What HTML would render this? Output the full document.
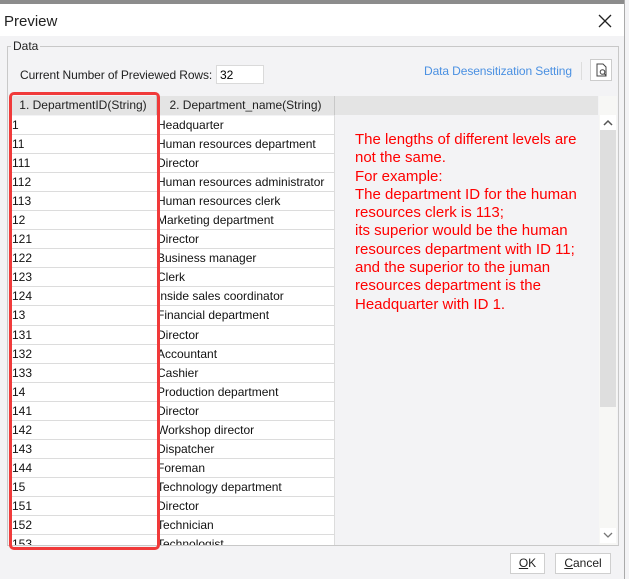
<!DOCTYPE html>
<html><head><meta charset="utf-8"><style>
*{box-sizing:border-box;margin:0;padding:0}
body{width:629px;height:579px;overflow:hidden;background:#f3f3f5;font-family:"Liberation Sans",Arial,sans-serif;position:relative}
.abs{position:absolute}
.topbar{left:0;top:0;width:629px;height:4px;background:#8c8c8c}
.title{left:0;top:4px;width:629px;height:32px;background:#fff}
.title span{position:absolute;left:4px;top:9px;font-size:15px;color:#222}
.fs{left:7px;top:46px;width:612px;height:500px;border:1px solid #c8c8c8}
.legend{left:11px;top:39px;font-size:12px;color:#222;background:#f3f3f5;padding:0 2px}
.lbl{left:20px;top:68px;font-size:12px;color:#222;letter-spacing:-0.1px}
.inp{left:216px;top:65px;width:48px;height:19px;background:#fff;border:1px solid #dadada;font-size:12px;padding:2px 3px}
.link{left:424px;top:64px;font-size:12px;color:#4a90e2;letter-spacing:-0.1px}
.sep{left:581px;top:62px;width:1px;height:18px;background:#ddd}
.ib{left:590px;top:59px;width:22px;height:22px;background:#fff;border:1px solid #ccc}
.hdr{left:10px;top:96px;width:588px;height:19px;background:#e4e4e4}
.h{position:absolute;top:0;height:19px;font-size:12px;color:#222;line-height:19px;text-align:center;border-right:1px solid #c8c8c8}
.grid{left:10px;top:116px;width:324px;height:429px;overflow:hidden;background:#fff}
.row{height:19.05px;border-bottom:1px solid #dcdcdc;font-size:12px;line-height:19px;color:#111;position:relative}
.c1{position:absolute;left:2px;top:0;width:145px}
.c2{position:absolute;left:147px;top:0;width:177px;overflow:hidden;border-left:1px solid #dcdcdc;white-space:nowrap}
.c2 i{font-style:normal;margin-left:-1px}
.vline{left:334px;top:115px;width:1px;height:430px;background:#dcdcdc}
.sb{left:599px;top:96px;width:18px;height:449px;background:#f7f7f5}
.thumb{left:600px;top:130px;width:16px;height:277px;background:#dedede}
.sbtn{left:600px;top:115px;width:16px;height:15px;background:#fff;font-size:10px;color:#555;text-align:center}
.red{left:9px;top:92px;width:151px;height:458px;border:3px solid #f03a3a;border-radius:5px}
.note{left:355px;top:131px;font-size:15px;line-height:18.3px;color:#f00}
.btn{top:553px;height:21px;background:#fff;border:1px solid #cfcfcf;font-size:12px;color:#222;text-align:center;line-height:19px}
.rb{left:624px;top:0;width:5px;height:579px;background:#f3f3f5;border-left:1px solid #aaa}
</style></head><body>
<div class="abs topbar"></div>
<div class="abs title"><span>Preview</span>
<svg style="position:absolute;left:598px;top:10px" width="14" height="14"><path d="M1 1L13 13M13 1L1 13" stroke="#222" stroke-width="1.3"/></svg></div>
<div class="abs fs"></div>
<div class="abs legend">Data</div>
<div class="abs lbl">Current Number of Previewed Rows:</div>
<div class="abs inp">32</div>
<div class="abs link">Data Desensitization Setting</div>
<div class="abs sep"></div>
<div class="abs ib"><svg width="20" height="20" style="position:absolute;left:0;top:0"><path d="M6 4h6l3 3v9H6z" fill="none" stroke="#444"/><circle cx="11.5" cy="12" r="2.3" fill="none" stroke="#444"/><path d="M13 13.5l2 2" stroke="#444"/></svg></div>
<div class="abs hdr">
<div class="h" style="left:0;width:147px">1. DepartmentID(String)</div>
<div class="h" style="left:147px;width:178px">2. Department_name(String)</div>
</div>
<div class="abs grid">
<div class="row"><span class="c1">1</span><span class="c2"><i>Headquarter</i></span></div>
<div class="row"><span class="c1">11</span><span class="c2"><i>Human resources department</i></span></div>
<div class="row"><span class="c1">111</span><span class="c2"><i>Director</i></span></div>
<div class="row"><span class="c1">112</span><span class="c2"><i>Human resources administrator</i></span></div>
<div class="row"><span class="c1">113</span><span class="c2"><i>Human resources clerk</i></span></div>
<div class="row"><span class="c1">12</span><span class="c2"><i>Marketing department</i></span></div>
<div class="row"><span class="c1">121</span><span class="c2"><i>Director</i></span></div>
<div class="row"><span class="c1">122</span><span class="c2"><i>Business manager</i></span></div>
<div class="row"><span class="c1">123</span><span class="c2"><i>Clerk</i></span></div>
<div class="row"><span class="c1">124</span><span class="c2"><i>Inside sales coordinator</i></span></div>
<div class="row"><span class="c1">13</span><span class="c2"><i>Financial department</i></span></div>
<div class="row"><span class="c1">131</span><span class="c2"><i>Director</i></span></div>
<div class="row"><span class="c1">132</span><span class="c2"><i>Accountant</i></span></div>
<div class="row"><span class="c1">133</span><span class="c2"><i>Cashier</i></span></div>
<div class="row"><span class="c1">14</span><span class="c2"><i>Production department</i></span></div>
<div class="row"><span class="c1">141</span><span class="c2"><i>Director</i></span></div>
<div class="row"><span class="c1">142</span><span class="c2"><i>Workshop director</i></span></div>
<div class="row"><span class="c1">143</span><span class="c2"><i>Dispatcher</i></span></div>
<div class="row"><span class="c1">144</span><span class="c2"><i>Foreman</i></span></div>
<div class="row"><span class="c1">15</span><span class="c2"><i>Technology department</i></span></div>
<div class="row"><span class="c1">151</span><span class="c2"><i>Director</i></span></div>
<div class="row"><span class="c1">152</span><span class="c2"><i>Technician</i></span></div>
<div class="row"><span class="c1">153</span><span class="c2"><i>Technologist</i></span></div>
</div>
<div class="abs vline"></div>
<div class="abs sb"></div>
<div class="abs thumb"></div>
<div class="abs sbtn"><svg width="10" height="8" style="margin-top:4px"><path d="M1 6l4-4 4 4" fill="none" stroke="#555" stroke-width="1.5"/></svg></div>
<div class="abs sbtn" style="top:528px"><svg width="10" height="8" style="margin-top:3px"><path d="M1 2l4 4 4-4" fill="none" stroke="#777" stroke-width="1.3"/></svg></div>
<div class="abs red"></div>
<div class="abs note">The lengths of different levels are<br>not the same.<br>For example:<br>The department ID for the human<br>resources clerk is 113;<br>its superior would be the human<br>resources department with ID 11;<br>and the superior to the juman<br>resources department is the<br>Headquarter with ID 1.</div>
<div class="abs btn" style="left:510px;width:35px"><u>O</u>K</div>
<div class="abs btn" style="left:555px;width:56px"><u>C</u>ancel</div>
<div class="abs rb"></div>
</body></html>
